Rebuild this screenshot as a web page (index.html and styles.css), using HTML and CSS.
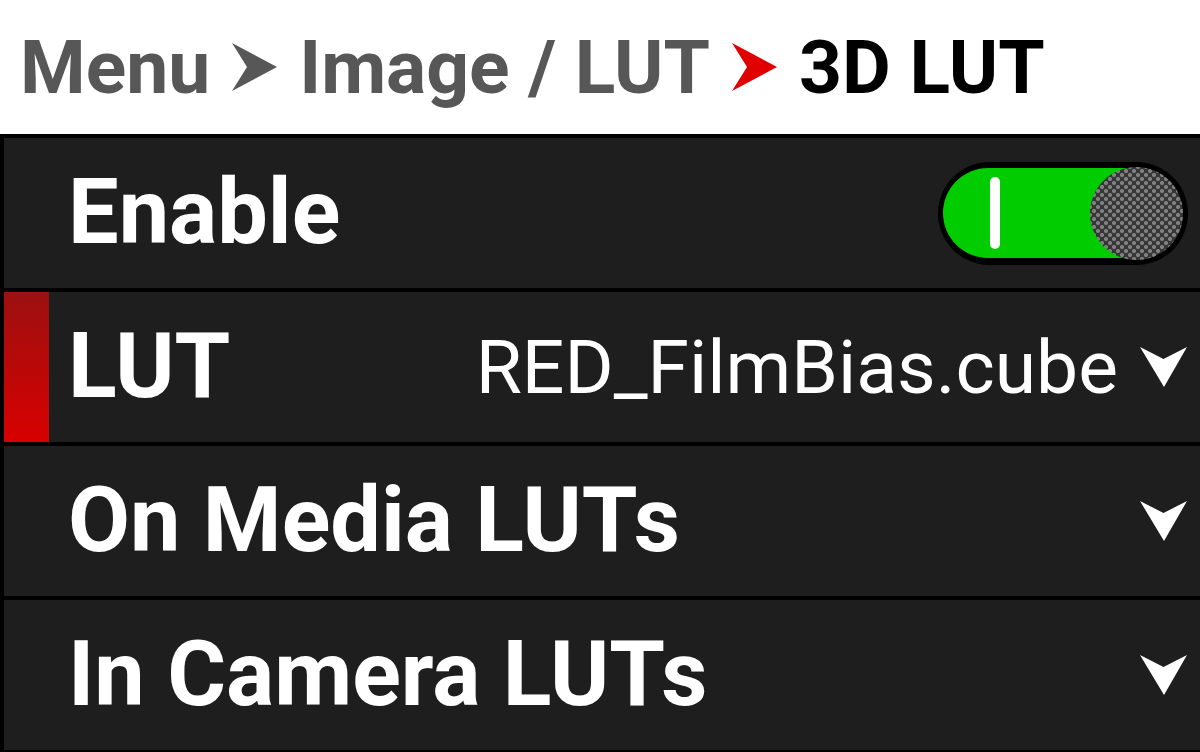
FILE: index.html
```html
<!DOCTYPE html>
<html>
<head>
<meta charset="utf-8">
<link rel="stylesheet" href="styles.css">
</head>
<body>
<div class="screen">
  <header class="crumbs">
    <span class="crumb">Menu</span>
    <svg class="sep" viewBox="0 0 45 48"><path d="M0 0 L45 24 L0 48 L15 24 Z" fill="#575757"/></svg>
    <span class="crumb">Image / LUT</span>
    <svg class="sep" viewBox="0 0 45 48"><path d="M0 0 L45 24 L0 48 L15 24 Z" fill="#e00000"/></svg>
    <span class="crumb current">3D LUT</span>
  </header>
  <div class="list">
    <div class="row">
      <div class="marker"></div>
      <span class="label">Enable</span>
      <div class="toggle">
        <div class="track"><span class="onbar"></span></div>
        <div class="knob"></div>
      </div>
    </div>
    <div class="row">
      <div class="marker active"></div>
      <span class="label">LUT</span>
      <span class="value">RED_FilmBias.cube</span>
      <svg class="chev" viewBox="0 0 47 40"><path d="M0 0 L23.5 12 L47 0 L24 40 Z" fill="#fff"/></svg>
    </div>
    <div class="row">
      <div class="marker"></div>
      <span class="label">On Media LUTs</span>
      <svg class="chev" viewBox="0 0 47 40"><path d="M0 0 L23.5 12 L47 0 L24 40 Z" fill="#fff"/></svg>
    </div>
    <div class="row">
      <div class="marker"></div>
      <span class="label">In Camera LUTs</span>
      <svg class="chev" viewBox="0 0 47 40"><path d="M0 0 L23.5 12 L47 0 L24 40 Z" fill="#fff"/></svg>
    </div>
  </div>
</div>
</body>
</html>
```

FILE: styles.css
```css
html, body {
  margin: 0;
  padding: 0;
  background: #ffffff;
}
.screen {
  width: 1200px;
  height: 752px;
  display: flex;
  flex-direction: column;
  overflow: hidden;
  font-family: Roboto, "Liberation Sans", sans-serif;
}
.crumbs {
  height: 134px;
  flex: none;
  display: flex;
  align-items: center;
  gap: 22px;
  padding-left: 20px;
  background: #fff;
  box-sizing: border-box;
}
.crumb {
  font-size: 75px;
  font-weight: 700;
  line-height: 1;
  color: #575757;
  white-space: pre;
}
.crumb.current {
  color: #000;
}
.sep {
  width: 45px;
  height: 48px;
  flex: none;
}
.list {
  flex: 1;
  display: flex;
  flex-direction: column;
  gap: 4px;
  background: #000;
  border-top: 4px solid #000;
  border-left: 4px solid #000;
}
.row {
  height: 150px;
  flex: none;
  display: flex;
  align-items: center;
  background: #1e1e1e;
  color: #fff;
}
.marker {
  width: 45px;
  align-self: stretch;
  flex: none;
}
.marker.active {
  background: linear-gradient(#9c1010, #d80000);
}
.label {
  margin-left: 19px;
  font-size: 90px;
  font-weight: 700;
  line-height: 1;
  flex: 1;
  white-space: nowrap;
}
.value {
  font-size: 75px;
  font-weight: 400;
  line-height: 1;
  margin-right: 22px;
  white-space: nowrap;
}
.chev {
  width: 47px;
  height: 42px;
  margin-right: 13px;
  flex: none;
}
.toggle {
  width: 250px;
  height: 103px;
  box-sizing: border-box;
  padding: 5px;
  margin-right: 12px;
  background: #000;
  border-radius: 52px;
  display: flex;
  align-items: center;
  flex: none;
}
.track {
  flex: 1;
  height: 90px;
  background: #00cc00;
  border-radius: 45px 0 0 45px;
  margin-right: -48px;
  display: flex;
  align-items: center;
  padding-left: 47px;
}
.onbar {
  width: 10px;
  height: 72px;
  background: #fff;
  border-radius: 5px;
}
.knob {
  width: 93px;
  height: 93px;
  border-radius: 50%;
  flex: none;
  position: relative;
  background-color: #363636;
  background-image:
    radial-gradient(circle, #808080 1.6px, transparent 2.4px),
    radial-gradient(circle, #808080 1.6px, transparent 2.4px);
  background-size: 8px 8px, 8px 8px;
  background-position: 0 0, 4px 4px;
}
```
